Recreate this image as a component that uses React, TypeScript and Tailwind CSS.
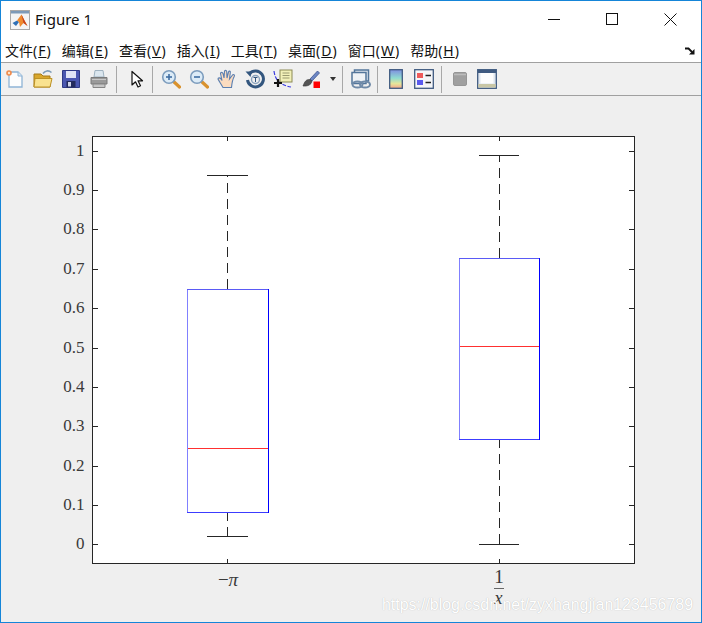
const menus = [
  ['文件', 'F'],
  ['编辑', 'E'],
  ['查看', 'V'],
  ['插入', 'I'],
  ['工具', 'T'],
  ['桌面', 'D'],
  ['窗口', 'W'],
  ['帮助', 'H'],
]

const yTicks = [
  ['1', 151],
  ['0.9', 190],
  ['0.8', 229],
  ['0.7', 269],
  ['0.6', 308],
  ['0.5', 348],
  ['0.4', 387],
  ['0.3', 426],
  ['0.2', 466],
  ['0.1', 505],
  ['0', 544],
] as const

function Sep() {
  return <div className="w-px h-[27px] bg-[#a8a8a8]" />
}

function Icon({ className, children }: { className?: string; children: React.ReactNode }) {
  return (
    <svg viewBox="0 0 20 20" className={`w-5 h-5 shrink-0 ${className ?? ''}`}>
      {children}
    </svg>
  )
}

function Lens({ minus }: { minus?: boolean }) {
  return (
    <>
      <path d="M12 12 L18.5 18" stroke="#d9922e" strokeWidth="3.2" strokeLinecap="round" />
      <circle cx="8" cy="8" r="6.3" fill="#dcebf7" stroke="#7c9cbd" strokeWidth="1.6" />
      <path d="M5 8H11" stroke="#3f6ea3" strokeWidth="1.6" />
      {!minus && <path d="M8 5V11" stroke="#3f6ea3" strokeWidth="1.6" />}
    </>
  )
}

// box edges are not the same blue in the picture
function Box({ x0, x1, y0, y1 }: { x0: number; x1: number; y0: number; y1: number }) {
  return (
    <>
      <path d={`M${x0 + 0.5} ${y0}V${y1 + 1}`} stroke="#8080ff" />
      <path d={`M${x0} ${y0 + 0.5}H${x1 + 1}`} stroke="#5a5af5" />
      <path d={`M${x0} ${y1 + 0.5}H${x1 + 1}`} stroke="#3c3cff" />
      <path d={`M${x1 + 0.5} ${y0}V${y1 + 1}`} stroke="#0000ff" />
    </>
  )
}

function Chart() {
  return (
    <svg viewBox="1 96 700 526" className="w-[700px] h-[526px] block">
      <rect x="92.5" y="136.5" width="542" height="427" fill="#fff" stroke="#262626" strokeWidth="1.2" shapeRendering="crispEdges" />
      <g stroke="#262626" shapeRendering="crispEdges">
        {yTicks.map(([label, y]) => (
          <path key={label} d={`M93 ${y + 0.5}H98M629 ${y + 0.5}H634`} />
        ))}
        <path d="M227.5 137V141M499.5 137V141M227.5 559V563M499.5 559V563" />
      </g>
      <g fontFamily="'Liberation Serif', serif" fontSize="17" fill="#3a3a3a" textAnchor="end">
        {yTicks.map(([label, y]) => (
          <text key={label} x="84.5" y={y + 5}>
            {label}
          </text>
        ))}
      </g>

      <g shapeRendering="crispEdges" fill="none">
        <path d="M227.5 289V176" stroke="#262626" strokeDasharray="10 6" />
        <path d="M227.5 512V536" stroke="#262626" strokeDasharray="9 6" />
        <path d="M207 175.5H248M207 536.5H248" stroke="#262626" />
        <Box x0={187} x1={268} y0={289} y1={512} />
        <path d="M188 448.5H268" stroke="#ff3030" />

        <path d="M499.5 258V155" stroke="#262626" strokeDasharray="10 6" />
        <path d="M499.5 544V439" stroke="#262626" strokeDasharray="10 6" />
        <path d="M479 155.5H519M479 544.5H519" stroke="#262626" />
        <Box x0={459} x1={539} y0={258} y1={439} />
        <path d="M460 346.5H539" stroke="#ff3030" />
      </g>

      <g fontFamily="'Liberation Serif', serif" fill="#3a3a3a" textAnchor="middle">
        <text x="228" y="586" fontSize="19">
          −<tspan fontStyle="italic">π</tspan>
        </text>
        <text x="499" y="583" fontSize="19">1</text>
        <path d="M494 588.5H504" stroke="#666" shapeRendering="crispEdges" />
        <text x="498.5" y="604" fontSize="18" fontStyle="italic">x</text>
      </g>
    </svg>
  )
}

export default function App() {
  return (
    <div className="relative w-[702px] h-[623px] border border-[#1585d8] bg-[#efefef] overflow-hidden flex flex-col font-['Noto_Sans','Noto_Sans_CJK_SC',sans-serif]">
      {/* title bar */}
      <div className="h-[39px] bg-white flex items-center shrink-0 pl-[9px] pb-[2px]">
        <svg viewBox="0 0 20 20" className="w-5 h-5 shrink-0">
          <rect x="0.5" y="0.5" width="19" height="19" fill="#f4f4f4" stroke="#a8a8a8" />
          <rect x="1" y="1" width="18" height="2.5" fill="#7d9ab8" />
          <path d="M2.5 13 L7 10.5 L9 12 L6 16Z" fill="#2f6fb5" />
          <path d="M7 10.5 L11.5 4.5 L14.5 10.5 L17.5 16 L13.5 13 L10 17 L9 12Z" fill="#ef8a2e" />
          <path d="M11.5 4.5 L14.5 10.5 L17.5 16 L13.5 13Z" fill="#c9431c" />
        </svg>
        <span className="ml-[5px] text-[15px] leading-none text-[#111]">Figure 1</span>
        <div className="ml-auto flex items-center pr-[24px]">
          <svg viewBox="0 0 13 13" className="w-[13px] h-[13px]">
            <path d="M1 6.5H13" stroke="#111" shapeRendering="crispEdges" />
          </svg>
          <svg viewBox="0 0 13 13" className="w-[13px] h-[13px] ml-[46px]">
            <rect x="0.5" y="0.5" width="11" height="11" fill="none" stroke="#111" shapeRendering="crispEdges" />
          </svg>
          <svg viewBox="0 0 13 13" className="w-[13px] h-[13px] ml-[45px]">
            <path d="M0.5 0.5L12.5 12.5M12.5 0.5L0.5 12.5" stroke="#111" fill="none" />
          </svg>
        </div>
      </div>

      {/* menu bar */}
      <div className="h-[23px] bg-white flex items-center shrink-0 pl-1 gap-[10px] text-[14px] leading-none text-[#111] border-b border-[#a0a0a0]">
        {menus.map(([name, key]) => (
          <span key={key}>
            {name}
            <span className="tracking-[1px]">
              (<span className="underline">{key}</span>)
            </span>
          </span>
        ))}
        <svg viewBox="0 0 10 8" className="ml-auto mr-[6px] w-[10px] h-2">
          <path d="M0 1.5H3.5L7 5" fill="none" stroke="#111" strokeWidth="1.8" />
          <path d="M9.5 2V7.5H4Z" fill="#111" />
        </svg>
      </div>

      {/* toolbar */}
      <div className="h-[33px] bg-[#f0f0f0] flex items-center shrink-0 pl-[4px] border-b border-[#a0a0a0]">
        <Icon>
          <path d="M4 3H13L17 7V18H4Z" fill="#fdfdfd" stroke="#8fb4d6" strokeWidth="1.3" />
          <path d="M13 3V7H17" fill="#dbe8f3" stroke="#8fb4d6" />
          <circle cx="4" cy="4" r="2.8" fill="#f08a4b" />
          <circle cx="4" cy="4" r="1.2" fill="#fde6c8" />
        </Icon>
        <Icon className="ml-2">
          <path d="M1 5H8L10 7H17V18H1Z" fill="#d9a72c" stroke="#a67b17" />
          <path d="M2 9.5H19L17 18H1Z" fill="#f9e28f" stroke="#bd9225" />
          <path d="M10 4.5C12 1.5 15.5 1 18.5 3.5" fill="none" stroke="#7d9cb8" strokeWidth="1.6" />
        </Icon>
        <Icon className="ml-2">
          <path d="M1.5 1.5H18.5V18.5H1.5Z" fill="#4a57b0" stroke="#2f3a85" />
          <rect x="5" y="2" width="10" height="7" fill="#dfe4f5" />
          <rect x="5.5" y="12" width="9" height="6.5" fill="#222a5c" />
          <rect x="7" y="13" width="3" height="4.5" fill="#cfd4ea" />
        </Icon>
        <Icon className="ml-2">
          <path d="M6 1.5H14L15 8H5Z" fill="#dbe6ee" stroke="#9fb2c0" />
          <path d="M2 8.5H18V15H2Z" fill="#9a9a9a" stroke="#7a7a7a" />
          <path d="M4 15H16V18.5H4Z" fill="#c6c6c6" stroke="#858585" />
          <path d="M3 10.5H17" stroke="#c8c8c8" />
        </Icon>
        <div className="ml-[7px]">
          <Sep />
        </div>
        <Icon className="ml-[10px]">
          <path d="M5 2.5V16L8.5 12.8L11 18L13.5 16.8L11 11.8H15.5Z" fill="#fff" stroke="#111" strokeWidth="1.2" strokeLinejoin="round" />
        </Icon>
        <div className="ml-[5px]">
          <Sep />
        </div>
        <Icon className="ml-2">
          <Lens />
        </Icon>
        <Icon className="ml-2">
          <Lens minus />
        </Icon>
        <Icon className="ml-2">
          <path
            d="M6 18.5C4 15 2 12 1 10C1 8.5 3 8.5 4 10L5 11.5L3.5 4.5C3.5 3 5.5 3 6 4.5L7 9L7.5 2.5C7.5 1 9.5 1 9.7 2.5L10 9L11.5 3C12 1.5 13.7 2 13.3 3.5L12.5 10L15.5 6C16.5 5 18 5.8 17.3 7.3C15.5 10.5 15 13 14.5 18.5Z"
            fill="#fbdcc0"
            stroke="#5b7fb0"
            strokeWidth="1.1"
          />
        </Icon>
        <Icon className="ml-2">
          <path d="M4.5 4.5A8 8 0 1 1 2.5 11" fill="none" stroke="#33567e" strokeWidth="3" />
          <path d="M0.5 2.5H7L5.5 8Z" fill="#33567e" />
          <circle cx="10.5" cy="10.5" r="4" fill="none" stroke="#8aa3bd" strokeWidth="1.4" />
          <path d="M8.5 8.5H12.5M10.5 8.5V13" stroke="#33567e" />
        </Icon>
        <Icon className="ml-2">
          <path d="M1 2C2 10 6 16 18 18" fill="none" stroke="#3a3ae0" strokeWidth="1.2" strokeDasharray="4 1.5" />
          <rect x="7" y="1" width="12" height="12" fill="#f2f0b8" stroke="#8b8a55" />
          <path d="M9.5 4H16.5M9.5 6.5H16.5M9.5 9H16.5" stroke="#9b9a70" />
          <path d="M1 14H9M5 10V18" stroke="#111" strokeWidth="2.2" />
        </Icon>
        <Icon className="ml-2">
          <path d="M9 10L16.5 2L18.5 4L11 12Z" fill="#6c86c4" stroke="#3c5590" strokeWidth="0.8" />
          <path d="M9 10.5C5 10 3.5 13 2 17C6 17.5 10.5 16 11 12Z" fill="#555" stroke="#333" strokeWidth="0.6" />
          <rect x="12.5" y="12.5" width="6.5" height="6.5" fill="#f00" />
        </Icon>
        <svg viewBox="0 0 8 4" className="w-2 h-1 ml-2 shrink-0">
          <path d="M1 0H7L4 4Z" fill="#333" />
        </svg>
        <div className="ml-[5px]">
          <Sep />
        </div>
        <Icon className="ml-2">
          <rect x="3.5" y="1" width="14" height="11" fill="#dfe7ef" stroke="#53769b" strokeWidth="1.5" />
          <rect x="1" y="3.5" width="14" height="11" fill="#eef2f6" stroke="#53769b" strokeWidth="1.5" />
          <ellipse cx="6.5" cy="15.5" rx="5" ry="3" fill="none" stroke="#6f8aa8" strokeWidth="2" />
          <ellipse cx="14" cy="15.5" rx="5" ry="3" fill="none" stroke="#6f8aa8" strokeWidth="2" />
        </Icon>
        <div className="ml-[6px]">
          <Sep />
        </div>
        <svg viewBox="0 0 14 20" className="w-[14px] h-5 ml-[11px] shrink-0">
          <defs>
            <linearGradient id="cb" x1="0" y1="0" x2="0" y2="1">
              <stop offset="0" stopColor="#7f8fe0" />
              <stop offset="0.45" stopColor="#8fdcd0" />
              <stop offset="0.75" stopColor="#e6e59a" />
              <stop offset="1" stopColor="#f3a58a" />
            </linearGradient>
          </defs>
          <rect x="0.7" y="0.7" width="12.6" height="18.6" fill="url(#cb)" stroke="#3f5a80" strokeWidth="1.3" />
        </svg>
        <Icon className="ml-[11px]">
          <rect x="0.7" y="0.7" width="18.6" height="18.6" fill="#f5f6f8" stroke="#3f5a80" strokeWidth="1.3" />
          <rect x="3" y="4" width="6" height="5" fill="#ee5a5a" />
          <rect x="3" y="11" width="6" height="5" fill="#5a5aee" />
          <path d="M11.5 6.5H17M11.5 13.5H17" stroke="#222" strokeWidth="1.5" />
        </Icon>
        <div className="ml-[7px]">
          <Sep />
        </div>
        <svg viewBox="0 0 14 14" className="w-[14px] h-[14px] ml-[11px] shrink-0">
          <rect x="0.5" y="0.5" width="13" height="13" rx="1.5" fill="#a0a0a0" stroke="#969696" />
          <path d="M1 2.5H13" stroke="#bcbcbc" strokeWidth="1.5" />
        </svg>
        <Icon className="ml-[10px]">
          <rect x="0.7" y="0.7" width="18.6" height="18.6" fill="#dfe6ef" stroke="#3f5a80" strokeWidth="1.3" />
          <rect x="1" y="1" width="18" height="3" fill="#3f5a80" />
          <rect x="3.5" y="4" width="13" height="10.5" fill="#fdfdfd" />
          <rect x="1.3" y="15" width="17.4" height="3.5" fill="#c9c7a6" />
        </Icon>
      </div>

      {/* figure */}
      <Chart />

      <span className="absolute left-[381px] top-[594px] text-[15.95px] leading-5 whitespace-nowrap font-['Liberation_Sans',sans-serif] text-white [text-shadow:0_0_1px_#b0b0b0]">
        https://blog.csdn.net/zyxhangjian123456789
      </span>
    </div>
  )
}
